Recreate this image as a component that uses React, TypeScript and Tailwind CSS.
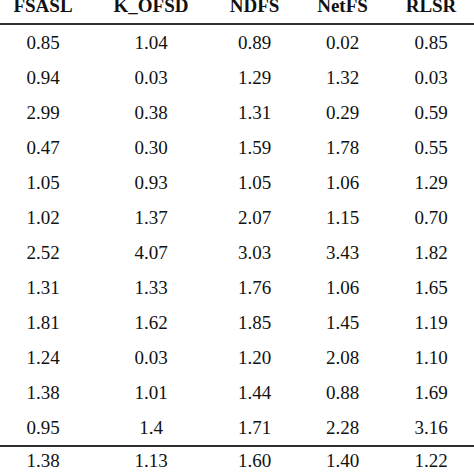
const headers = ['FSASL', 'K_OFSD', 'NDFS', 'NetFS', 'RLSR'];

const rows: string[][] = [
  ['0.85', '1.04', '0.89', '0.02', '0.85'],
  ['0.94', '0.03', '1.29', '1.32', '0.03'],
  ['2.99', '0.38', '1.31', '0.29', '0.59'],
  ['0.47', '0.30', '1.59', '1.78', '0.55'],
  ['1.05', '0.93', '1.05', '1.06', '1.29'],
  ['1.02', '1.37', '2.07', '1.15', '0.70'],
  ['2.52', '4.07', '3.03', '3.43', '1.82'],
  ['1.31', '1.33', '1.76', '1.06', '1.65'],
  ['1.81', '1.62', '1.85', '1.45', '1.19'],
  ['1.24', '0.03', '1.20', '2.08', '1.10'],
  ['1.38', '1.01', '1.44', '0.88', '1.69'],
  ['0.95', '1.4', '1.71', '2.28', '3.16'],
];

const average = ['1.38', '1.13', '1.60', '1.40', '1.22'];

const cols = 'grid grid-cols-[86px_130px_77px_99px_78px]';

export default function App() {
  return (
    <div className="w-[474px] h-[474px] overflow-hidden bg-white text-[#111] [font-family:'Liberation_Serif','Times_New_Roman',serif] text-[19px]">
      <div className="-mt-[11px]">
        {/* Header */}
        <div className={`${cols} leading-[34px] font-bold border-b-2 border-[#2e2e2e]`}>
          {headers.map((h) => (
            <div key={h} className="text-center">
              {h}
            </div>
          ))}
        </div>

        {/* Body */}
        <div className="border-b-2 border-[#2e2e2e]">
          {rows.map((row, i) => (
            <div key={i} className={`${cols} leading-[35px]`}>
              {row.map((v, j) => (
                <div key={j} className="text-center">
                  {v}
                </div>
              ))}
            </div>
          ))}
        </div>

        {/* Average */}
        <div className={`${cols} leading-[27px]`}>
          {average.map((v, j) => (
            <div key={j} className="text-center">
              {v}
            </div>
          ))}
        </div>
      </div>
    </div>
  );
}
